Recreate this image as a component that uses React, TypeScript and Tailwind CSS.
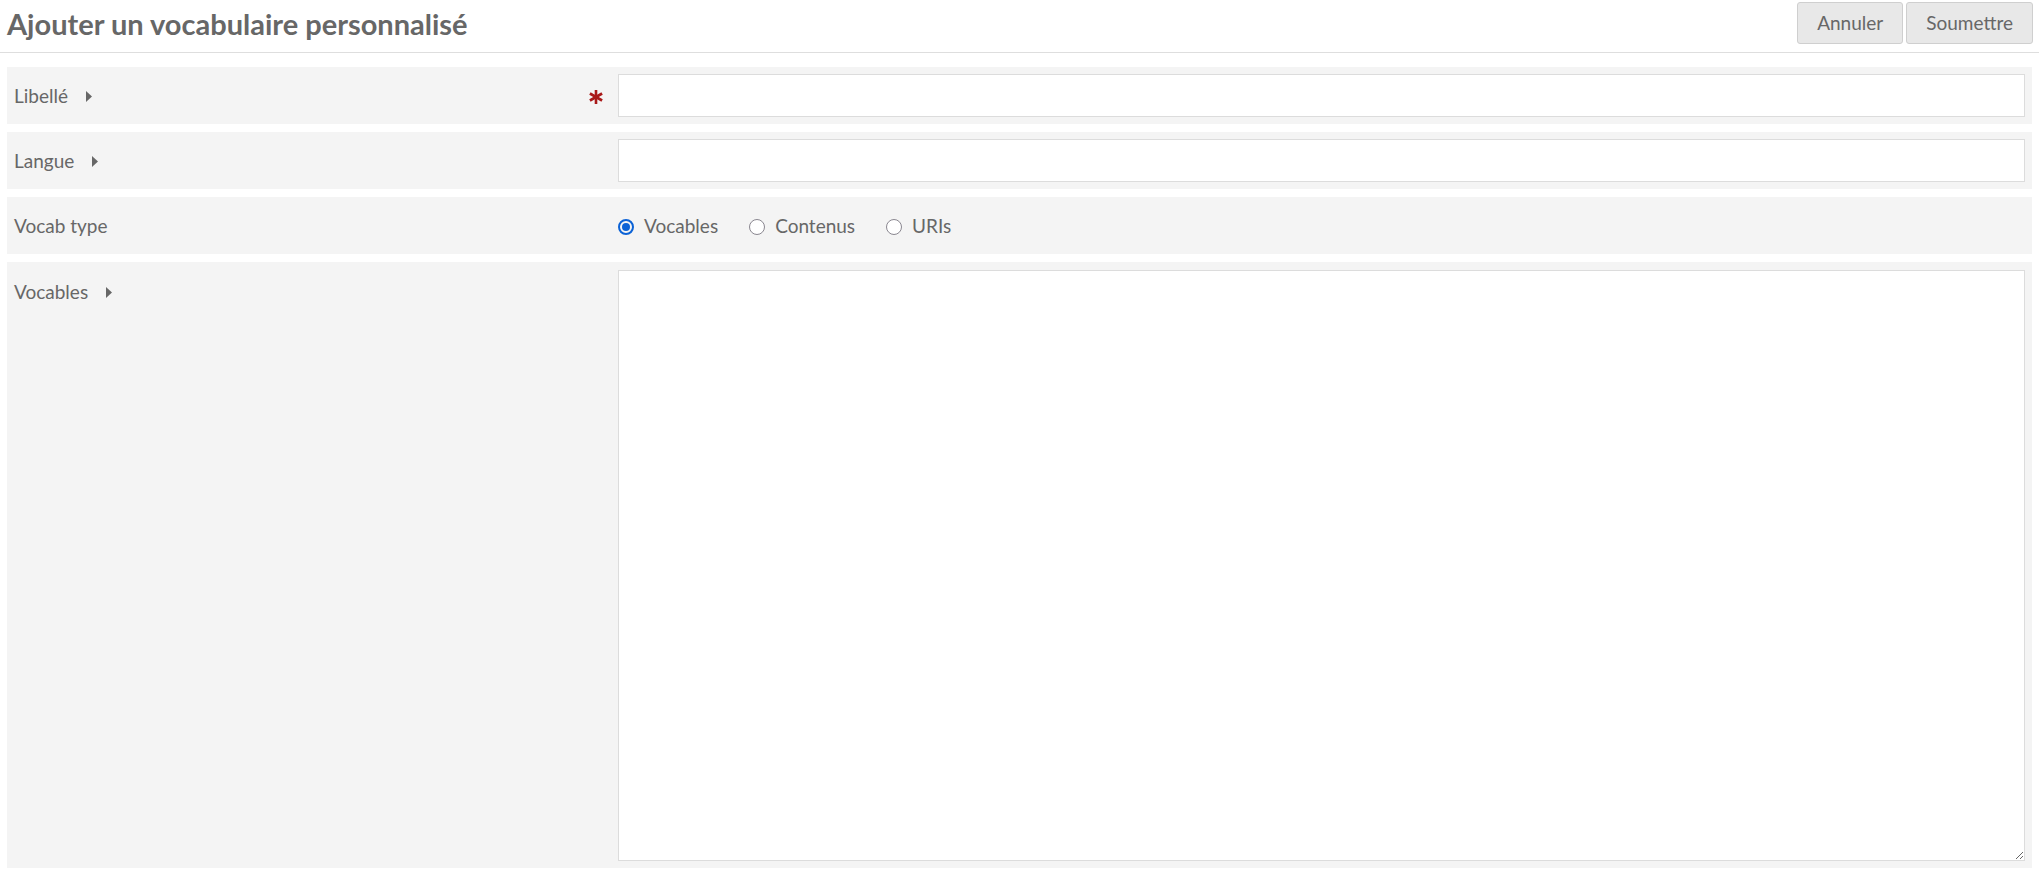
import React from "react";

function Caret() {
    return (
        <svg width="6" height="11" viewBox="0 0 6 11" className="ml-[18px] shrink-0">
            <path d="M0 0 L6 5.5 L0 11 Z" fill="#676767" />
        </svg>
    );
}

function Asterisk() {
    return (
        <svg width="14" height="14" viewBox="0 0 14 14" className="shrink-0">
            <g stroke="#a91919" strokeWidth="2.6" strokeLinecap="butt">
                <line x1="7" y1="0" x2="7" y2="14" />
                <line x1="0.9" y1="3.5" x2="13.1" y2="10.5" />
                <line x1="0.9" y1="10.5" x2="13.1" y2="3.5" />
            </g>
        </svg>
    );
}

function Radio({ label, checked }: { label: string; checked?: boolean }) {
    return (
        <label className="flex items-center mr-[31px]">
            {checked ? (
                <span className="w-[16px] h-[16px] rounded-full border-2 border-[#0b62d6] flex items-center justify-center">
                    <span className="w-[8px] h-[8px] rounded-full bg-[#0b62d6]" />
                </span>
            ) : (
                <span className="w-[16px] h-[16px] rounded-full border-[1.5px] border-[#8a8790] bg-white" />
            )}
            <span className="ml-[10px]">{label}</span>
        </label>
    );
}

function Row({ label, caret = true, required = false, children }: { label: string; caret?: boolean; required?: boolean; children: React.ReactNode }) {
    return (
        <div className="flex bg-[#f4f4f4] px-[7px] py-[7px]">
            <div className="w-[604px] shrink-0 h-[43px] flex items-center pr-[15px] pt-[2px]">
                <span>{label}</span>
                {caret && <Caret />}
                <span className="flex-1" />
                {required && <Asterisk />}
            </div>
            <div className="flex-1 min-w-0">{children}</div>
        </div>
    );
}

export default function App() {
    return (
        <div className="min-h-screen bg-white text-[#676767] text-[19px]" style={{ fontFamily: "Lato, 'Open Sans', sans-serif" }}>
            {/* Header */}
            <div className="flex items-start justify-between border-b border-[#dedede] h-[53px] pl-[7px] pr-[6px]">
                <h1 className="text-[29px] font-bold leading-none pt-[9px]">Ajouter un vocabulaire personnalisé</h1>
                <div className="flex gap-[3px] pt-[2px]">
                    <button className="h-[42px] px-[19px] bg-[#e8e8e8] border border-[#cfcfcf] rounded-[3px] text-[#676767]">Annuler</button>
                    <button className="h-[42px] px-[19px] bg-[#e8e8e8] border border-[#cfcfcf] rounded-[3px] text-[#676767]">Soumettre</button>
                </div>
            </div>

            <div className="flex flex-col gap-[8px] mx-[7px] mt-[14px]">
                <Row label="Libellé" required>
                    <input type="text" className="w-full h-[43px] bg-white border border-[#dcdcdc] px-2 outline-none" />
                </Row>
                <Row label="Langue">
                    <input type="text" className="w-full h-[43px] bg-white border border-[#dcdcdc] px-2 outline-none" />
                </Row>
                <Row label="Vocab type" caret={false}>
                    <div className="h-[43px] flex items-center pt-[2px]">
                        <Radio label="Vocables" checked />
                        <Radio label="Contenus" />
                        <Radio label="URIs" />
                    </div>
                </Row>
                <div className="flex bg-[#f4f4f4] px-[7px] pt-[8px] pb-[7px]">
                    <div className="w-[604px] shrink-0 h-[43px] flex items-center pr-[15px] pt-[2px]">
                        <span>Vocables</span>
                        <Caret />
                    </div>
                    <textarea className="flex-1 h-[591px] bg-white border border-[#dcdcdc] p-2 outline-none resize-y" />
                </div>
            </div>
        </div>
    );
}
